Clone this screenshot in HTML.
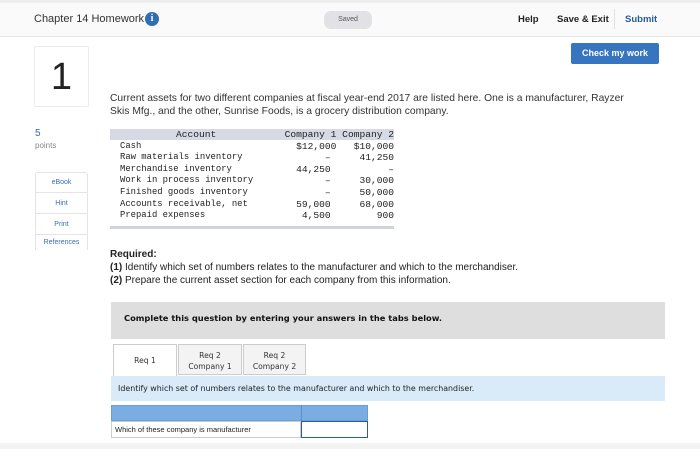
<!DOCTYPE html>
<html><head><style>
body{margin:0;width:700px;height:449px;background:#fff;font-family:"Liberation Sans",sans-serif;position:relative;overflow:hidden;color:#222}
.a{position:absolute}
.mono{font-family:"Liberation Mono",monospace;font-size:9.6px;line-height:11.6px;color:#222}
.side{position:absolute;left:35px;width:53px;border:1px solid #e4e4e4;font-size:7px;color:#3a6fb0;text-align:center;box-sizing:border-box}
.tab{position:absolute;top:344px;height:31px;border:1px solid #ccc;background:#f3f3f3;font-family:"DejaVu Sans",sans-serif;font-size:7.6px;text-align:center;box-sizing:border-box;line-height:11px;padding-top:5px;color:#333}
</style></head><body>
<div class="a" style="left:0;top:0;width:700px;height:37px;background:#fafafa;border-bottom:1px solid #e6e6e6;border-top:3px solid #eee;box-sizing:border-box"></div>
<div class="a" style="left:34px;top:13px;font-size:11px;color:#333">Chapter 14 Homework</div>
<div class="a" style="left:145px;top:12px;width:14px;height:14px;border-radius:50%;background:#2f6db5;color:#fff;font-size:10px;font-weight:bold;text-align:center;line-height:14px;font-family:'Liberation Serif',serif">i</div>
<div class="a" style="left:324px;top:11px;width:48px;height:18px;border-radius:7px;background:#e2e2e6;font-size:7px;color:#555;text-align:center;line-height:18px">Saved</div>
<div class="a" style="left:518px;top:14px;font-size:9.5px;font-weight:bold;color:#222">Help</div>
<div class="a" style="left:557px;top:14px;font-size:9.5px;font-weight:bold;color:#222">Save &amp; Exit</div>
<div class="a" style="left:614px;top:9px;width:1px;height:20px;background:#e0e0e0"></div>
<div class="a" style="left:625px;top:14px;font-size:9.5px;font-weight:bold;color:#2a5c99">Submit</div>
<div class="a" style="left:571px;top:43px;width:88px;height:21px;background:#3875c0;border-radius:2px;color:#fff;font-size:9px;font-weight:bold;text-align:center;line-height:21px">Check my work</div>
<div class="a" style="left:34px;top:46px;width:55px;height:61px;border:1px solid #ececec;box-sizing:border-box;border-radius:2px;font-size:38px;text-align:center;line-height:60px;color:#222">1</div>
<div class="a" style="left:110px;top:92px;width:535px;font-size:10.3px;line-height:13px;color:#333">Current assets for two different companies at fiscal year-end 2017 are listed here. One is a manufacturer, Rayzer Skis Mfg., and the other, Sunrise Foods, is a grocery distribution company.</div>
<div class="a" style="left:35px;top:128px;font-size:10px;color:#2f6db5">5</div>
<div class="a" style="left:35px;top:141px;font-size:8px;color:#888">points</div>
<div class="side" style="top:172px;height:21px;line-height:20px;border-radius:3px 3px 0 0">eBook</div>
<div class="side" style="top:192px;height:22px;line-height:21px">Hint</div>
<div class="side" style="top:213px;height:22px;line-height:21px">Print</div>
<div class="side" style="top:234px;height:16px;line-height:15px;border-bottom:none">References</div>
<div class="a" style="left:110px;top:129px;width:284px;height:11px;background:#d6dae4"></div>
<div class="a" style="left:110px;top:226px;width:284px;height:3px;background:#cfd3dd"></div>
<div class="a mono" style="left:176px;top:129px">Account</div>
<div class="a mono" style="left:120px;top:140.6px;white-space:pre;font-size:8.9px">Cash
Raw materials inventory
Merchandise inventory
Work in process inventory
Finished goods inventory
Accounts receivable, net
Prepaid expenses</div>
<div class="a mono" style="left:270px;top:129px;width:124px;text-align:right;white-space:pre">Company 1 Company 2
$12,000   $10,000
     –     41,250
44,250          –
     –     30,000
     –     50,000
59,000     68,000
 4,500        900</div>
<div class="a" style="left:110px;top:248px;font-size:10px;line-height:13px;color:#222"><b>Required:</b><br><b>(1)</b> Identify which set of numbers relates to the manufacturer and which to the merchandiser.<br><b>(2)</b> Prepare the current asset section for each company from this information.</div>
<div class="a" style="left:111px;top:302px;width:554px;height:37px;background:#dedede"></div>
<div class="a" style="left:124px;top:313px;font-family:'DejaVu Sans',sans-serif;font-size:8.3px;font-weight:bold;color:#111">Complete this question by entering your answers in the tabs below.</div>
<div class="tab" style="left:113px;width:64px;background:#fff;border-bottom:none;height:33px;padding-top:10px">Req 1</div>
<div class="tab" style="left:178px;width:64px">Req 2<br>Company 1</div>
<div class="tab" style="left:243px;width:63px">Req 2<br>Company 2</div>
<div class="a" style="left:111px;top:376px;width:554px;height:25px;background:#d9ebf8"></div>
<div class="a" style="left:118px;top:384px;font-family:'DejaVu Sans',sans-serif;font-size:7.9px;color:#222">Identify which set of numbers relates to the manufacturer and which to the merchandiser.</div>
<div class="a" style="left:111px;top:405px;width:257px;height:16px;background:#7aaee2;border:1px solid #6a9ed4;box-sizing:border-box"></div>
<div class="a" style="left:301px;top:405px;width:1px;height:16px;background:#5c8fc6"></div>
<div class="a" style="left:111px;top:421px;width:190px;height:17px;border:1px solid #ccc;box-sizing:border-box;font-size:7.5px;line-height:15px;padding-left:3px;color:#222">Which of these company is manufacturer</div>
<div class="a" style="left:301px;top:421px;width:67px;height:17px;border:1px solid #2c5e9e;box-sizing:border-box"></div>
<div class="a" style="left:0;top:443px;width:700px;height:6px;background:#f3f3f3"></div>
</body></html>
